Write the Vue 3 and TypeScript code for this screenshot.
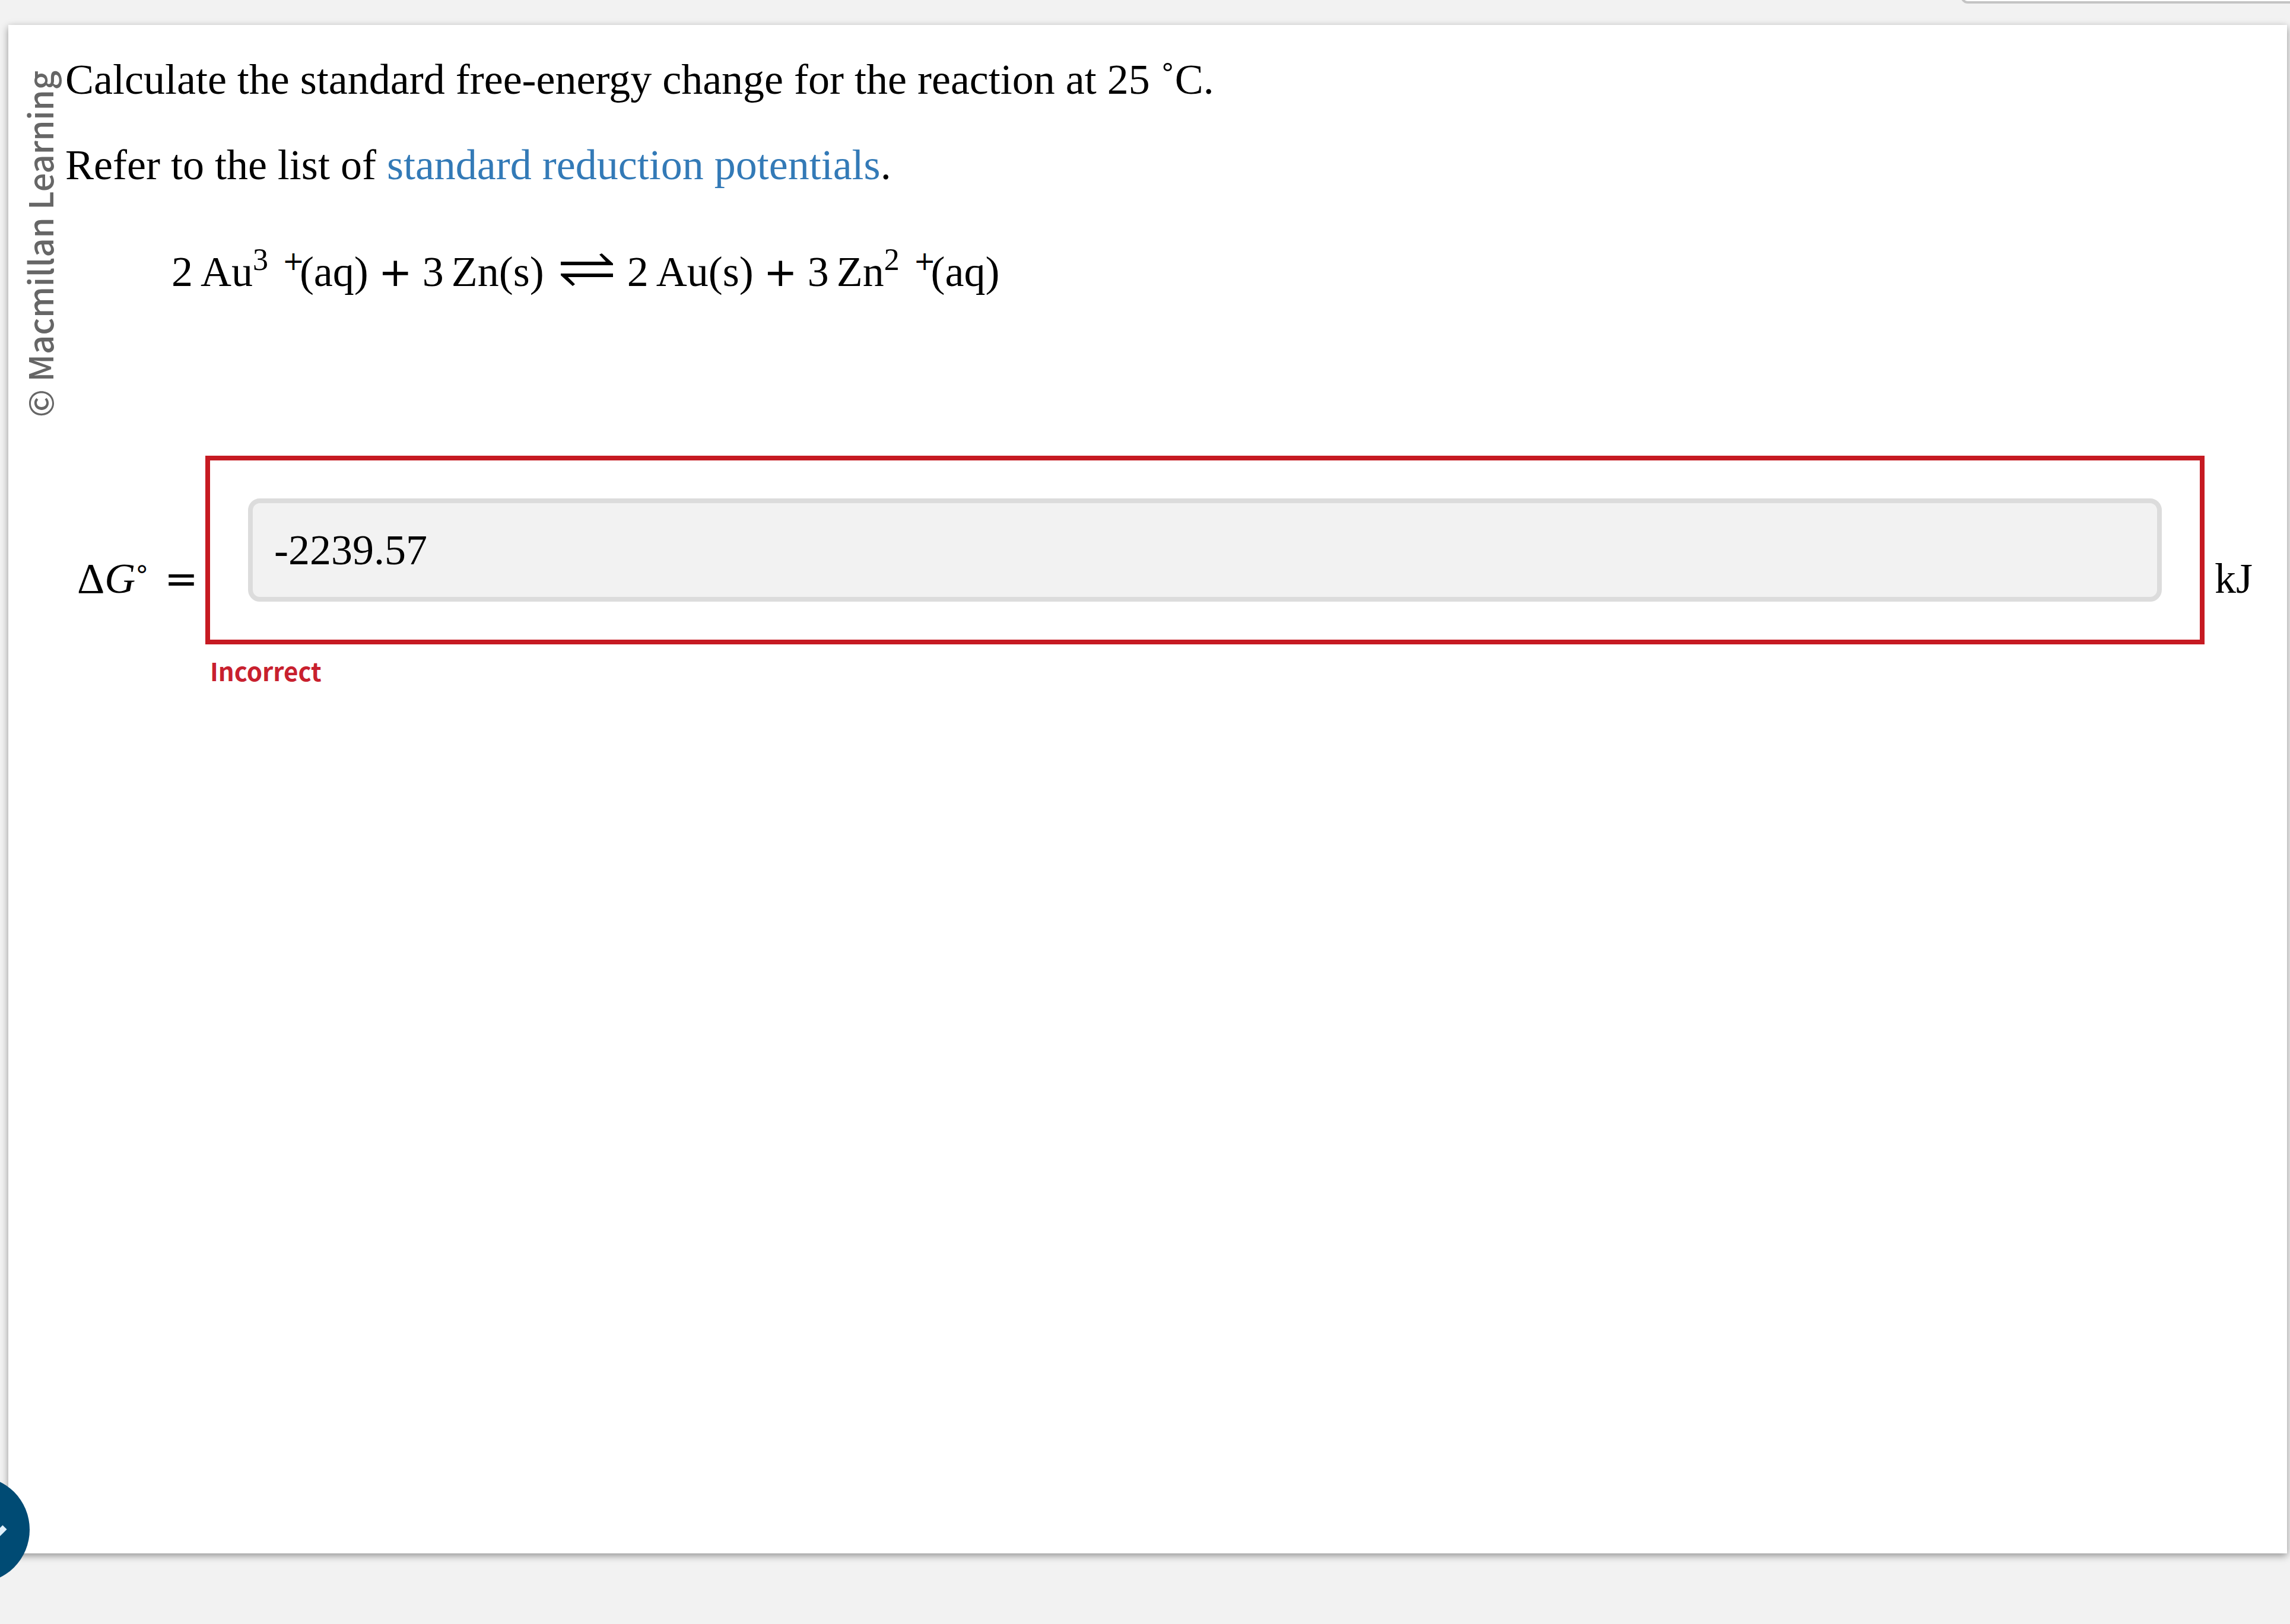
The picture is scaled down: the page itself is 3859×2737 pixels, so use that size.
<script setup lang="ts">
import { ref } from 'vue'

const answer = ref<string>('-2239.57')
</script>

<template>
  <div class="page">
    <button class="toolbar-button" type="button" aria-label="Resources"></button>

    <main class="card">
      <aside class="watermark">© Macmillan Learning</aside>

      <section class="question">
        <p class="line">Calculate the standard free-energy change for the reaction at 25 ˚C.</p>
        <p class="line">Refer to the list of <a href="#potentials">standard reduction potentials</a>.</p>

        <div class="equation">
          <span>2</span><span class="thin">Au</span><sup>3</sup><sup class="charge">+</sup><span>(aq)</span>
          <span class="op">+</span>
          <span>3</span><span class="thin">Zn(s)</span>
          <svg class="arrows" viewBox="0 0 88 56" aria-label="is in equilibrium with">
            <path d="M0 15H76L65 3L69 1L88 18V21H0Z" />
            <path d="M88 41H12L24 53L20 56L0 38V35H88Z" />
          </svg>
          <span>2</span><span class="thin">Au(s)</span>
          <span class="op">+</span>
          <span>3</span><span class="thin">Zn</span><sup>2</sup><sup class="charge">+</sup><span>(aq)</span>
        </div>

        <div class="answer">
          <label class="quantity" for="answer">
            <span>Δ<i>G</i><span class="degree">°</span></span>
            <span class="equals">=</span>
          </label>
          <div class="field">
            <div class="frame">
              <input id="answer" v-model="answer" type="text" readonly />
            </div>
            <p class="feedback">Incorrect</p>
          </div>
          <span class="unit">kJ</span>
        </div>
      </section>
    </main>

    <button class="bubble" type="button" aria-label="Expand">
      <svg viewBox="0 0 180 180">
        <path d="M138 86L90 134L42 86" />
      </svg>
    </button>
  </div>
</template>

<style>
body {
  margin: 0;
  background: #f2f2f2;
}
</style>

<style scoped>
.page {
  position: relative;
  box-sizing: border-box;
  display: flex;
  flex-direction: column;
  min-height: 100vh;
  padding: 42px 5px 119px 14px;
  overflow: hidden;
  background: #f2f2f2;
  color: #000;
  font: 72px/104px "Liberation Serif", "Times New Roman", serif;
}

.toolbar-button {
  position: absolute;
  top: -80px;
  right: -20px;
  width: 575px;
  height: 86px;
  border: 4px solid #c4c4c4;
  border-radius: 12px;
  background: #fff;
}

.card {
  flex: 1;
  display: flex;
  align-items: flex-start;
  background: #fff;
  box-shadow: 0 4px 12px rgba(0, 0, 0, 0.4);
}

.watermark {
  flex: none;
  width: 88px;
  margin: 77px 0 0 8px;
  color: #666;
  font: 500 56px/88px "Noto Sans CJK SC", sans-serif;
  writing-mode: vertical-rl;
  text-orientation: sideways;
  transform: rotate(180deg);
  white-space: nowrap;
}

.question {
  flex: 1;
  padding: 40px 58px 0 0;
}

.line {
  margin: 0 0 40px;
}

a {
  color: #337ab7;
  text-decoration: none;
}

.equation {
  margin: 76px 0 258px 179px;
  white-space: nowrap;
}

.thin {
  margin-left: 13px;
}

sup {
  font-size: 52px;
  line-height: 0;
  vertical-align: 27px;
}

.charge {
  margin: 0 -8px 0 24px;
  font-family: "DejaVu Sans", sans-serif;
  font-size: 44px;
}

.op,
.equals {
  font-family: "DejaVu Sans", sans-serif;
  font-size: 68px;
  line-height: 0;
}

.op {
  margin: 0 17px;
}

.arrows {
  width: 88px;
  height: 56px;
  margin: 0 24px 0 28px;
}

.answer {
  display: flex;
  align-items: center;
}

.quantity {
  flex: none;
  display: flex;
  align-items: baseline;
  justify-content: space-between;
  box-sizing: border-box;
  width: 236px;
  padding: 0 12px 0 20px;
}

.degree {
  font-family: "DejaVu Sans", sans-serif;
  font-size: 44px;
  line-height: 0;
  vertical-align: 14px;
}

.field {
  flex: 1;
}

.frame {
  padding: 64px;
  border: 8px solid #c61a22;
}

input {
  display: block;
  box-sizing: border-box;
  width: 100%;
  height: 174px;
  padding: 0 36px;
  border: 8px solid #dcdcdc;
  border-radius: 20px;
  outline: none;
  background: #f2f2f2;
  color: inherit;
  font: inherit;
}

.feedback {
  margin: 0;
  padding: 14px 8px 22px;
  color: #c8202e;
  font: 700 42px/60px "Noto Sans CJK SC", sans-serif;
}

.unit {
  flex: none;
  margin-left: 17px;
}

.bubble {
  position: absolute;
  bottom: 69px;
  left: -130px;
  width: 180px;
  height: 180px;
  padding: 0;
  border: 0;
  border-radius: 50%;
  background: #004b74;
}

.bubble svg {
  display: block;
  fill: none;
  stroke: #e0f1fc;
  stroke-width: 10px;
}
</style>
